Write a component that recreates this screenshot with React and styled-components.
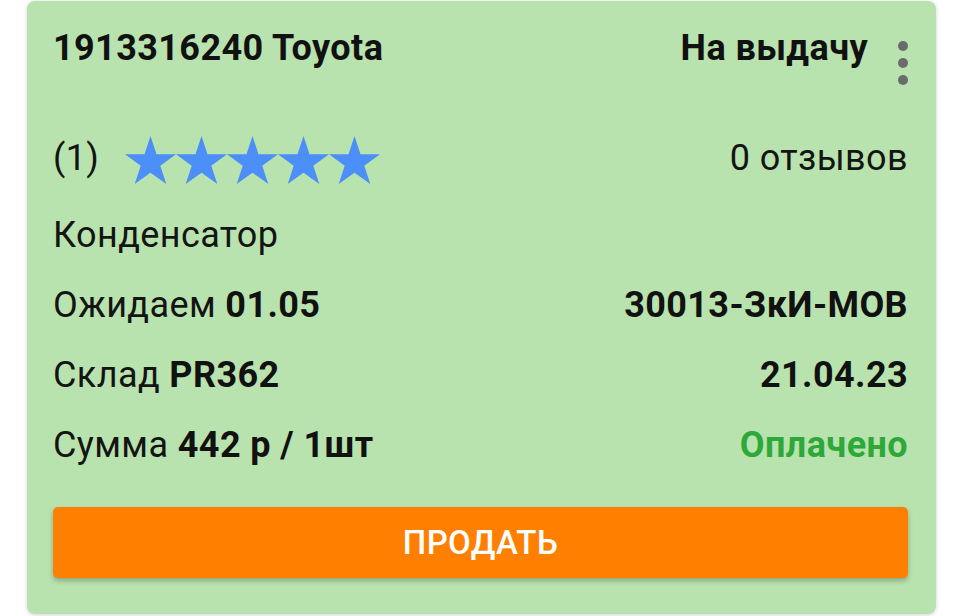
import React from "react";
import styled, { createGlobalStyle } from "styled-components";

const GlobalStyle = createGlobalStyle`
  html, body {
    margin: 0;
    padding: 0;
    background: #ffffff;
    font-family: Roboto, "Noto Sans", sans-serif;
  }
`;

const Page = styled.div`
  width: 960px;
  height: 616px;
  padding: 1px 0 0 27px;
  box-sizing: border-box;
  overflow: hidden;
`;

const Card = styled.div`
  width: 909px;
  height: 613px;
  box-sizing: border-box;
  padding: 0 28px 0 26px;
  background: #b9e3ae;
  border-radius: 8px;
  box-shadow: 0 1px 4px rgba(0, 0, 0, 0.18);
  display: flex;
  flex-direction: column;
  letter-spacing: 0.4px;
`;

const Header = styled.div`
  height: 94px;
  display: flex;
  align-items: center;
  justify-content: space-between;
`;

const Title = styled.span`
  font-size: 36px;
  font-weight: 700;
  color: #111;
`;

const Status = styled.div`
  display: flex;
  align-items: center;
  gap: 30px;
`;

const Dots = styled.div`
  display: flex;
  flex-direction: column;
  gap: 7px;
  margin-top: 30px;
  span {
    width: 10px;
    height: 10px;
    border-radius: 50%;
    background: #6b6b6b;
  }
`;

const Row = styled.div`
  height: ${(p) => p.h || 70}px;
  margin-top: ${(p) => p.mt || 0}px;
  display: flex;
  align-items: center;
  justify-content: space-between;
  font-size: 36px;
  color: #141414;
`;

const Left = styled.div`
  display: flex;
  align-items: center;
`;

const Value = styled.b`
  font-weight: 700;
  color: ${(p) => p.color || "#111"};
`;

const Stars = styled.div`
  display: flex;
  margin-left: 26px;
  margin-top: 4px;
`;

const Button = styled.button`
  margin-top: 27px;
  height: 71px;
  border: none;
  border-radius: 5px;
  background: #ff8000;
  color: #fff;
  font-family: Roboto, sans-serif;
  font-size: 33px;
  font-weight: 500;
  letter-spacing: 0.4px;
  box-shadow: 0 3px 5px rgba(0, 0, 0, 0.25);
`;

function Star() {
  return (
    <svg width="51" height="48" viewBox="0 0 51 48">
      <path
        d="M25.5 0 L31.5 18.3 L51 18.3 L35.3 29.7 L41.3 48 L25.5 36.7 L9.7 48 L15.7 29.7 L0 18.3 L19.5 18.3 Z"
        fill="#4d8ff8"
      />
    </svg>
  );
}

export default function App() {
  return (
    <Page>
      <GlobalStyle />
      <Card>
        <Header>
          <Title>1913316240 Toyota</Title>
          <Status>
            <Title>На выдачу</Title>
            <Dots>
              <span />
              <span />
              <span />
            </Dots>
          </Status>
        </Header>
        <Row h={84} mt={21}>
          <Left>
            (1)
            <Stars>
              {[0, 1, 2, 3, 4].map((i) => (
                <Star key={i} />
              ))}
            </Stars>
          </Left>
          <span>0 отзывов</span>
        </Row>
        <Row>
          <span>Конденсатор</span>
        </Row>
        <Row>
          <span>
            Ожидаем <Value>01.05</Value>
          </span>
          <Value>30013-ЗкИ-МОВ</Value>
        </Row>
        <Row>
          <span>
            Склад <Value>PR362</Value>
          </span>
          <Value>21.04.23</Value>
        </Row>
        <Row>
          <span>
            Сумма <Value>442 р / 1шт</Value>
          </span>
          <Value color="#2fa83a">Оплачено</Value>
        </Row>
        <Button>ПРОДАТЬ</Button>
      </Card>
    </Page>
  );
}
